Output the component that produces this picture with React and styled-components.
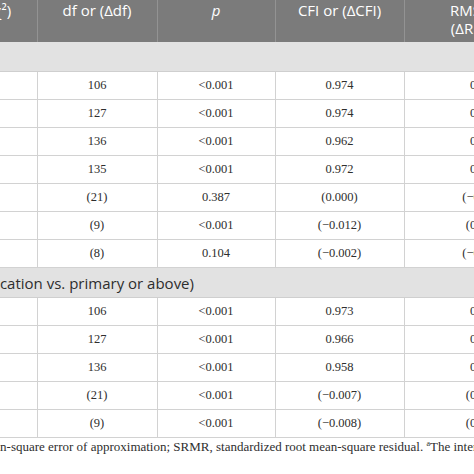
import React from "react";
import styled, { createGlobalStyle } from "styled-components";

const Global = createGlobalStyle`
  html, body {
    margin: 0;
    padding: 0;
    background: #ffffff;
    overflow: hidden;
  }
  body {
    width: 474px;
    height: 474px;
  }
`;

const Figure = styled.div`
  margin-left: -260px;
  width: 964px;
`;

const Table = styled.table`
  border-collapse: collapse;
  table-layout: fixed;
  width: 964px;
  font-family: "Liberation Serif", "Times New Roman", serif;
  font-size: 12.5px;
  color: #2e2e2e;
`;

const HeadCell = styled.th`
  background: #7b7b7b;
  color: #ffffff;
  font-family: "Open Sans", "Noto Sans", sans-serif;
  font-weight: 400;
  font-size: 15px;
  line-height: 17.5px;
  vertical-align: top;
  text-align: center;
  padding: 2px 8px 5px;
  border-left: 1px solid #939393;
  font-style: ${({ $italic }) => ($italic ? "italic" : "normal")};
  &:first-child {
    border-left: 0;
  }
`;

const GroupCell = styled.td`
  background: #e2e2e2;
  font-family: "Open Sans", "Noto Sans", sans-serif;
  font-size: 15px;
  color: #2e2e2e;
  height: 29px;
  padding: 0 0 0 83px;
  text-align: left;
  white-space: nowrap;
  border-bottom: 1px solid #cfcfcf;
`;

const Cell = styled.td`
  height: 27px;
  padding: 0 8px;
  text-align: ${({ $left }) => ($left ? "left" : "center")};
  border: 1px solid #d2d2d2;
  border-top: 0;
  white-space: nowrap;
  &:first-child {
    border-left: 0;
  }
`;

const Footnote = styled.p`
  margin: 1px 0 0 -59px;
  font-family: "Liberation Serif", "Times New Roman", serif;
  font-size: 13px;
  color: #2e2e2e;
  white-space: nowrap;
  sup {
    font-size: 8px;
  }
`;

const widths = [178, 119, 120, 118, 129, 160, 140];

const groups = [
  {
    title: "Gender",
    rows: [
      ["Configural", "312.45", "106", "<0.001", "0.974", "0.054", "0.041"],
      ["Metric", "338.91", "127", "<0.001", "0.974", "0.050", "0.046"],
      ["Scalar", "421.30", "136", "<0.001", "0.962", "0.057", "0.049"],
      ["Partial scalar", "356.18", "135", "<0.001", "0.972", "0.051", "0.047"],
      ["Metric vs. configural", "(26.47)", "(21)", "0.387", "(0.000)", "(\u22120.004)", "(0.005)"],
      ["Scalar vs. metric", "(82.39)", "(9)", "<0.001", "(\u22120.012)", "(0.007)", "(0.003)"],
      ["Partial scalar vs. metric", "(17.27)", "(8)", "0.104", "(\u22120.002)", "(\u22120.001)", "(0.001)"],
    ],
  },
  {
    title: "Education (no formal education vs. primary or above)",
    rows: [
      ["Configural", "318.76", "106", "<0.001", "0.973", "0.055", "0.042"],
      ["Metric", "365.28", "127", "<0.001", "0.966", "0.053", "0.051"],
      ["Scalar", "402.91", "136", "<0.001", "0.958", "0.056", "0.053"],
      ["Metric vs. configural", "(46.52)", "(21)", "<0.001", "(\u22120.007)", "(0.002)", "(0.009)"],
      ["Scalar vs. metric", "(37.63)", "(9)", "<0.001", "(\u22120.008)", "(0.003)", "(0.002)"],
    ],
  },
];

export default function App() {
  return (
    <>
      <Global />
      <Figure>
        <Table>
          <colgroup>
            {widths.map((w, i) => (
              <col key={i} style={{ width: w }} />
            ))}
          </colgroup>
          <thead>
            <tr>
              <HeadCell>Model</HeadCell>
              <HeadCell>{"\u03c7\u00b2 or (\u0394\u03c7\u00b2)"}</HeadCell>
              <HeadCell>{"df or (\u0394df)"}</HeadCell>
              <HeadCell $italic>p</HeadCell>
              <HeadCell>{"CFI or (\u0394CFI)"}</HeadCell>
              <HeadCell>
                RMSEA or
                <br />
                {"(\u0394RMSEA)"}
              </HeadCell>
              <HeadCell>
                SRMR or
                <br />
                {"(\u0394SRMR)"}
              </HeadCell>
            </tr>
          </thead>
          <tbody>
            {groups.map((g) => (
              <React.Fragment key={g.title}>
                <tr>
                  <GroupCell colSpan={7}>{g.title}</GroupCell>
                </tr>
                {g.rows.map((r, i) => (
                  <tr key={i}>
                    {r.map((v, j) => (
                      <Cell key={j} $left={j === 0}>
                        {v}
                      </Cell>
                    ))}
                  </tr>
                ))}
              </React.Fragment>
            ))}
          </tbody>
        </Table>
        <Footnote>
          {"\u03c7\u00b2, chi-square; CFI, comparative fit index; RMSEA, root mean-square error of approximation; SRMR, standardized root mean-square residual. "}
          <sup>a</sup>
          The intercept of item 3 was freely estimated.
        </Footnote>
      </Figure>
    </>
  );
}
